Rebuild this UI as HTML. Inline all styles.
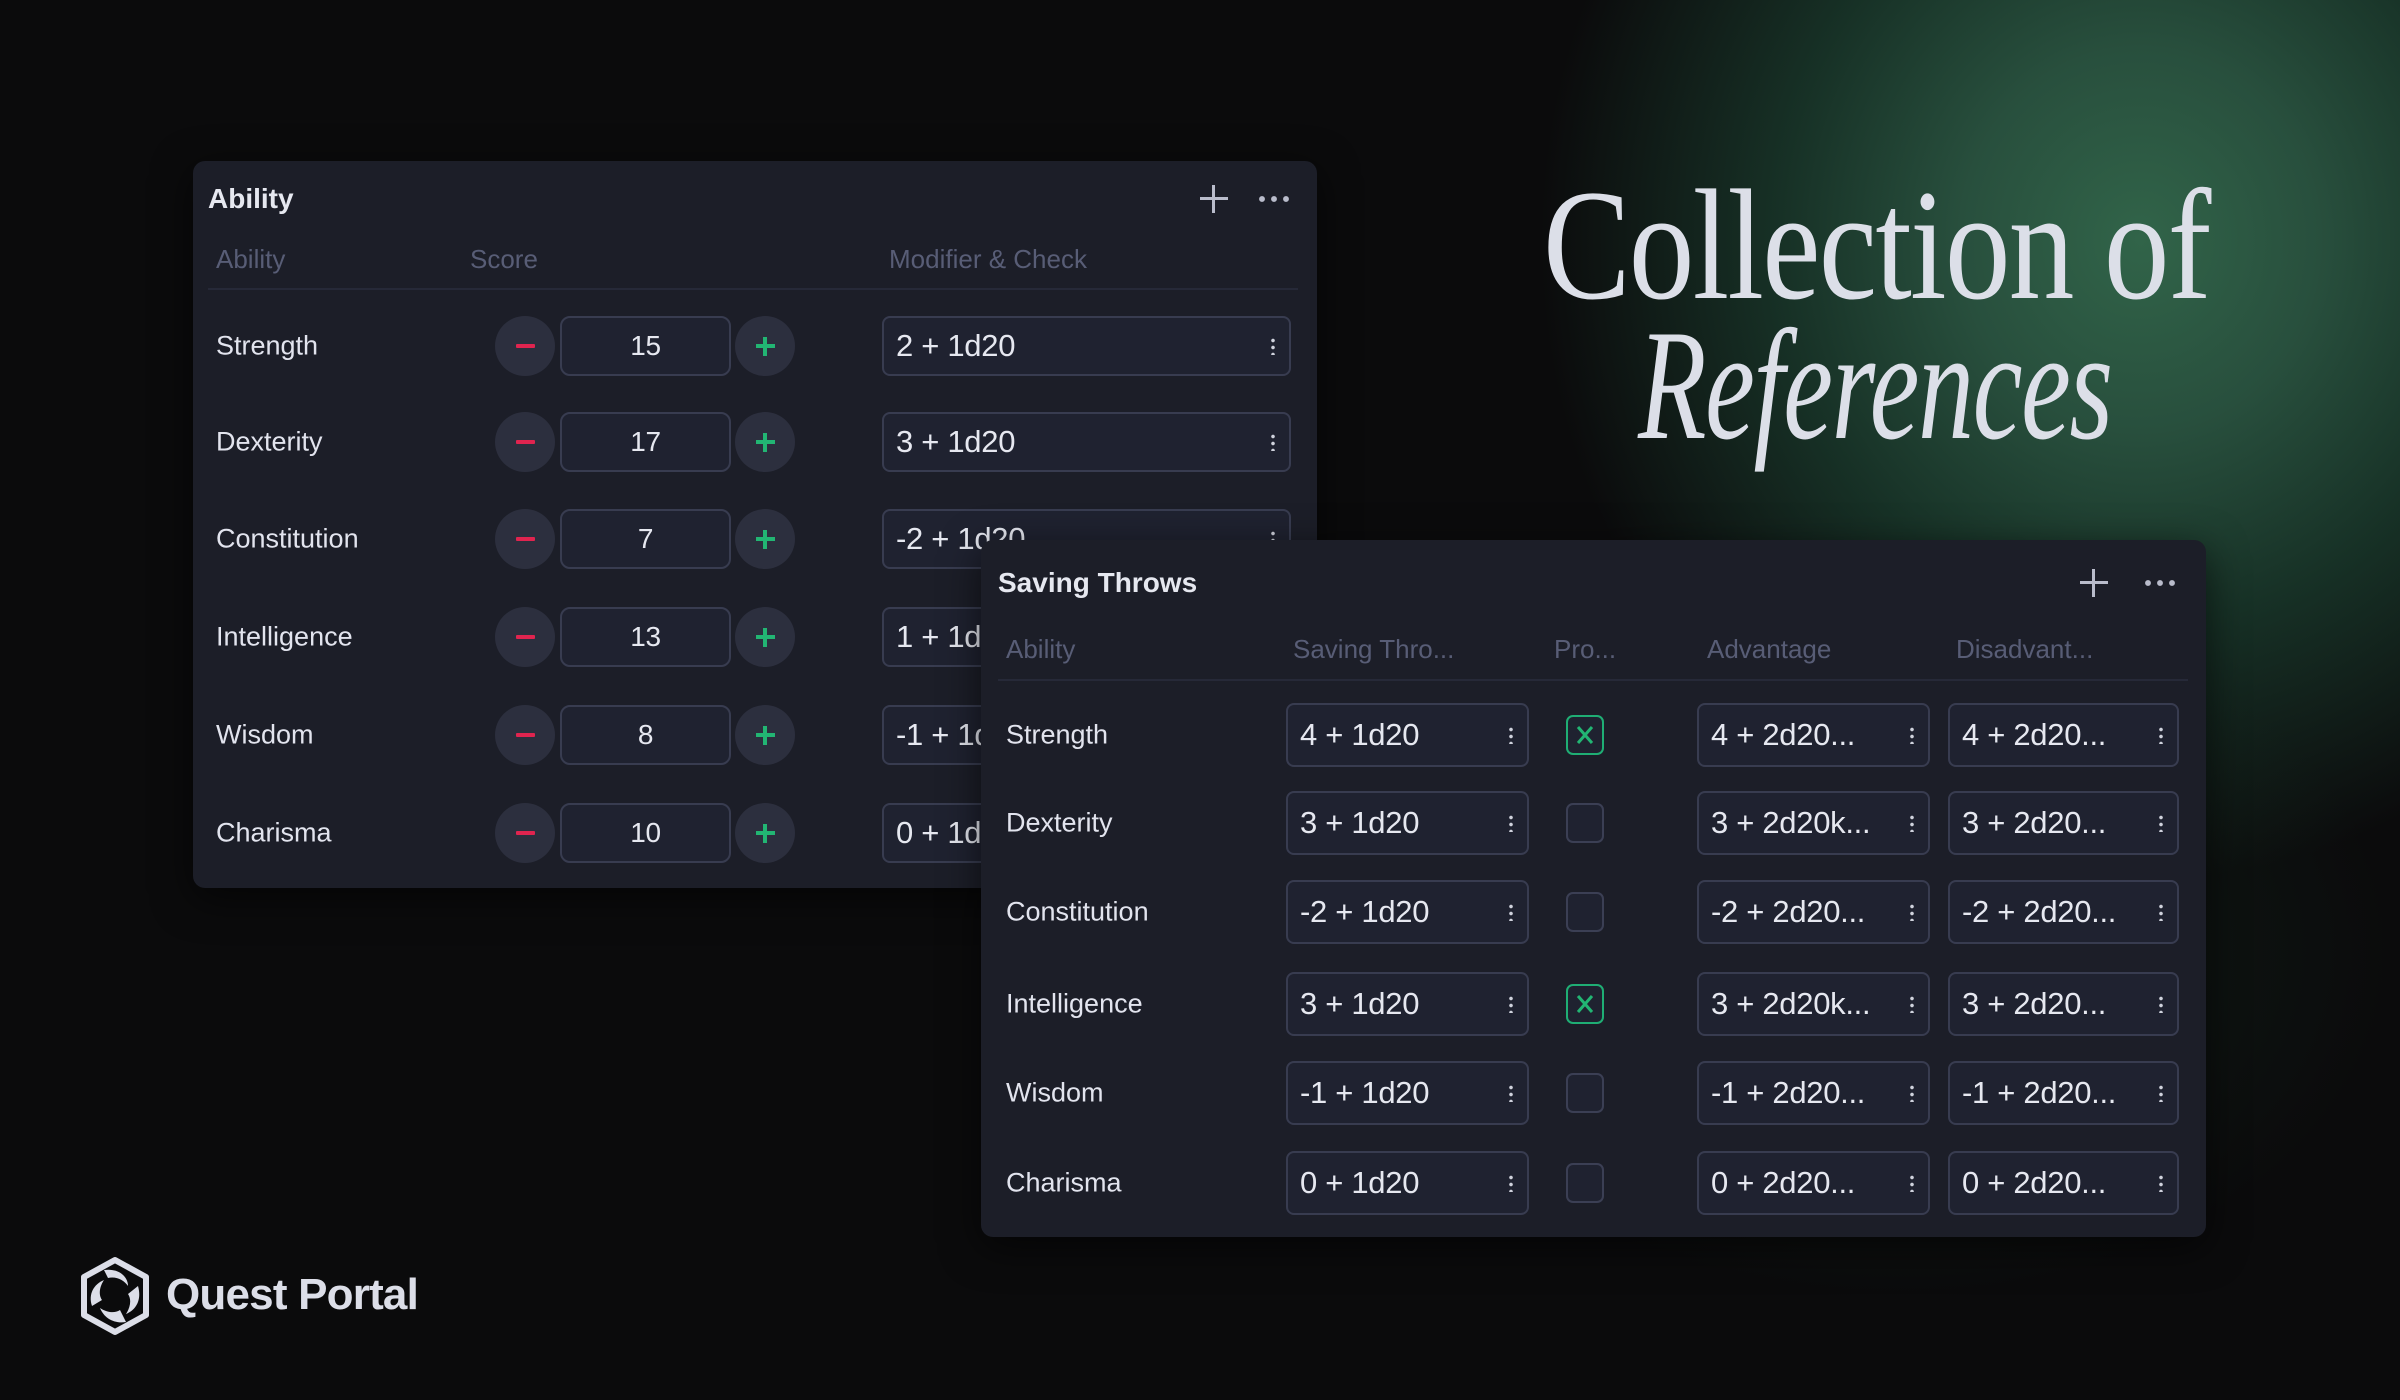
<!DOCTYPE html>
<html><head><meta charset="utf-8"><style>
*{margin:0;padding:0;box-sizing:border-box}
body{width:2400px;height:1400px;overflow:hidden;background:#0b0b0c;font-family:"Liberation Sans",sans-serif;color:#e2e4ee;position:relative}
.glow{position:absolute;left:0;top:0;width:2400px;height:1400px;background:radial-gradient(ellipse 600px 640px at 2140px 240px,#316449 0%,#284f3d 30%,#173126 60%,rgba(11,11,12,0) 100%)}
.glow2{position:absolute;left:0;top:0;width:2400px;height:1400px;background:radial-gradient(ellipse 700px 500px at 1900px 950px,rgba(30,70,45,.35),rgba(0,0,0,0) 70%)}
.a{position:absolute}
.panel{position:absolute;background:#1c1e28;border-radius:12px;box-shadow:0 10px 40px rgba(0,0,0,.6)}
.title{font-weight:bold;font-size:28px;color:#e6e8f0}
.hdr{font-size:26px;color:#585d76}
.lbl{font-size:27px;color:#e2e4ee;transform:translateY(-50%)}
.box{position:absolute;background:#1f2230;border:2px solid #383c50;border-radius:8px;font-size:31px;color:#e6e8f0;display:flex;align-items:center;padding-left:12px;letter-spacing:-0.3px}
.box .d{position:absolute;right:14px;top:50%;transform:translateY(-50%);width:4px;height:18px;background:radial-gradient(circle,#cfd2dc 1.6px,transparent 2px) 0 0/4px 7px repeat-y}
.circ{position:absolute;width:60px;height:60px;border-radius:50%;background:#2c2f3e}
.circ.m::after{content:"";position:absolute;left:21px;top:28px;width:19px;height:4px;background:#e0244f;border-radius:1px}
.circ.p::before{content:"";position:absolute;left:21px;top:28px;width:19px;height:4px;background:#22b573}
.circ.p::after{content:"";position:absolute;left:28px;top:21px;width:4px;height:19px;background:#22b573}
.chk{position:absolute;width:38px;height:40px;border:2px solid #3b3f54;border-radius:7px;background:#1f2230}
.chk.on{border-color:#1fae74}
.plus{position:absolute;width:28px;height:28px}
.plus::before{content:"";position:absolute;left:0;top:12px;width:28px;height:3px;background:#b9bccb}
.plus::after{content:"";position:absolute;left:12px;top:0;width:3px;height:28px;background:#b9bccb}
.dots{position:absolute;width:34px;height:6px;background:radial-gradient(circle,#b9bccb 2.6px,transparent 3.2px) 0 0/12px 6px repeat-x}
</style></head><body>
<div class="glow"></div><div class="glow2"></div>

<div class="panel" style="left:193px;top:161px;width:1124px;height:727px">
  <div class="a title" style="left:15px;top:22px">Ability</div>
  <div class="plus" style="left:1007px;top:24px"></div>
  <div class="dots" style="left:1063px;top:35px"></div>
  <div class="a hdr" style="left:23px;top:83px">Ability</div>
  <div class="a hdr" style="left:277px;top:83px">Score</div>
  <div class="a hdr" style="left:696px;top:83px">Modifier &amp; Check</div>
  <div class="a" style="left:15px;top:127px;width:1090px;height:2px;background:#262938"></div>
</div>
<div id="ab"></div>

<div class="panel" style="left:981px;top:540px;width:1225px;height:697px;z-index:2">
  <div class="a title" style="left:17px;top:27px">Saving Throws</div>
  <div class="plus" style="left:1099px;top:29px"></div>
  <div class="dots" style="left:1161px;top:40px"></div>
  <div class="a hdr" style="left:25px;top:94px">Ability</div>
  <div class="a hdr" style="left:312px;top:94px">Saving Thro...</div>
  <div class="a hdr" style="left:573px;top:94px">Pro...</div>
  <div class="a hdr" style="left:726px;top:94px">Advantage</div>
  <div class="a hdr" style="left:975px;top:94px">Disadvant...</div>
  <div class="a" style="left:17px;top:139px;width:1190px;height:2px;background:#262938"></div>
</div>

<div class="a" style="left:1543px;top:155px;font-family:'Liberation Serif',serif;font-size:158px;color:#dcdfe8;transform:scaleX(.83);transform-origin:0 0;white-space:nowrap;letter-spacing:-2px">Collection of</div>
<div class="a" style="left:1638px;top:295px;font-family:'Liberation Serif',serif;font-style:italic;font-size:158px;color:#dcdfe8;transform:scaleX(.71);transform-origin:0 0;white-space:nowrap;letter-spacing:-2px">References</div>

<svg class="a" style="left:78px;top:1256px" width="74" height="80" viewBox="0 0 74 80">
  <path d="M37 4 L68 21 L68 59 L37 76 L6 59 L6 21 Z" fill="none" stroke="#dcdee8" stroke-width="6" stroke-linejoin="round"/>
  <g fill="#dcdee8">
    <path d="M26 14 C40 12 50 20 50 30 C46 24 38 20 30 22 Z"/>
    <path d="M60 30 C64 44 58 54 48 58 C52 52 54 44 50 38 Z"/>
    <path d="M48 66 C36 68 26 62 22 52 C28 56 36 58 42 54 Z"/>
    <path d="M14 50 C10 38 16 28 26 24 C22 30 20 38 24 44 Z"/>
  </g>
</svg>
<div class="a" style="left:166px;top:1270px;font-size:44px;font-weight:bold;color:#dcdee8;letter-spacing:-0.8px">Quest Portal</div>

<script>
var ab=document.getElementById('ab'),h='';
var names=['Strength','Dexterity','Constitution','Intelligence','Wisdom','Charisma'];
var sc=['15','17','7','13','8','10'],md=['2 + 1d20','3 + 1d20','-2 + 1d20','1 + 1d20','-1 + 1d20','0 + 1d20'];
var ys=[346,442,539,637,735,833];
for(var i=0;i<6;i++){var y=ys[i];
h+='<div class="a lbl" style="left:216px;top:'+y+'px">'+names[i]+'</div>';
h+='<div class="circ m" style="left:495px;top:'+(y-30)+'px"></div>';
h+='<div class="box" style="left:560px;top:'+(y-30)+'px;width:171px;height:60px;justify-content:center;padding:0;font-size:28px;border-radius:10px">'+sc[i]+'</div>';
h+='<div class="circ p" style="left:735px;top:'+(y-30)+'px"></div>';
h+='<div class="box" style="left:882px;top:'+(y-30)+'px;width:409px;height:60px">'+md[i]+'<span class="d"></span></div>';}
var sv=['4 + 1d20','3 + 1d20','-2 + 1d20','3 + 1d20','-1 + 1d20','0 + 1d20'];
var av=['4 + 2d20...','3 + 2d20k...','-2 + 2d20...','3 + 2d20k...','-1 + 2d20...','0 + 2d20...'];
var dv=['4 + 2d20...','3 + 2d20...','-2 + 2d20...','3 + 2d20...','-1 + 2d20...','0 + 2d20...'];
var on=[1,0,0,1,0,0];var y2=[735,823,912,1004,1093,1183];
for(var i=0;i<6;i++){var y=y2[i];
h+='<div class="a lbl" style="left:1006px;top:'+y+'px;z-index:3">'+names[i]+'</div>';
h+='<div class="box" style="left:1286px;top:'+(y-32)+'px;width:243px;height:64px;z-index:3">'+sv[i]+'<span class="d"></span></div>';
h+='<div class="chk'+(on[i]?' on':'')+'" style="left:1566px;top:'+(y-20)+'px;z-index:3">'+(on[i]?'<svg width="34" height="36" viewBox="0 0 34 36" style="position:absolute;left:0;top:0"><path d="M10 10 L24 26 M24 10 L10 26" stroke="#22b573" stroke-width="3" fill="none"/></svg>':'')+'</div>';
h+='<div class="box" style="left:1697px;top:'+(y-32)+'px;width:233px;height:64px;z-index:3">'+av[i]+'<span class="d"></span></div>';
h+='<div class="box" style="left:1948px;top:'+(y-32)+'px;width:231px;height:64px;z-index:3">'+dv[i]+'<span class="d"></span></div>';}
ab.innerHTML=h;
</script>
</body></html>
